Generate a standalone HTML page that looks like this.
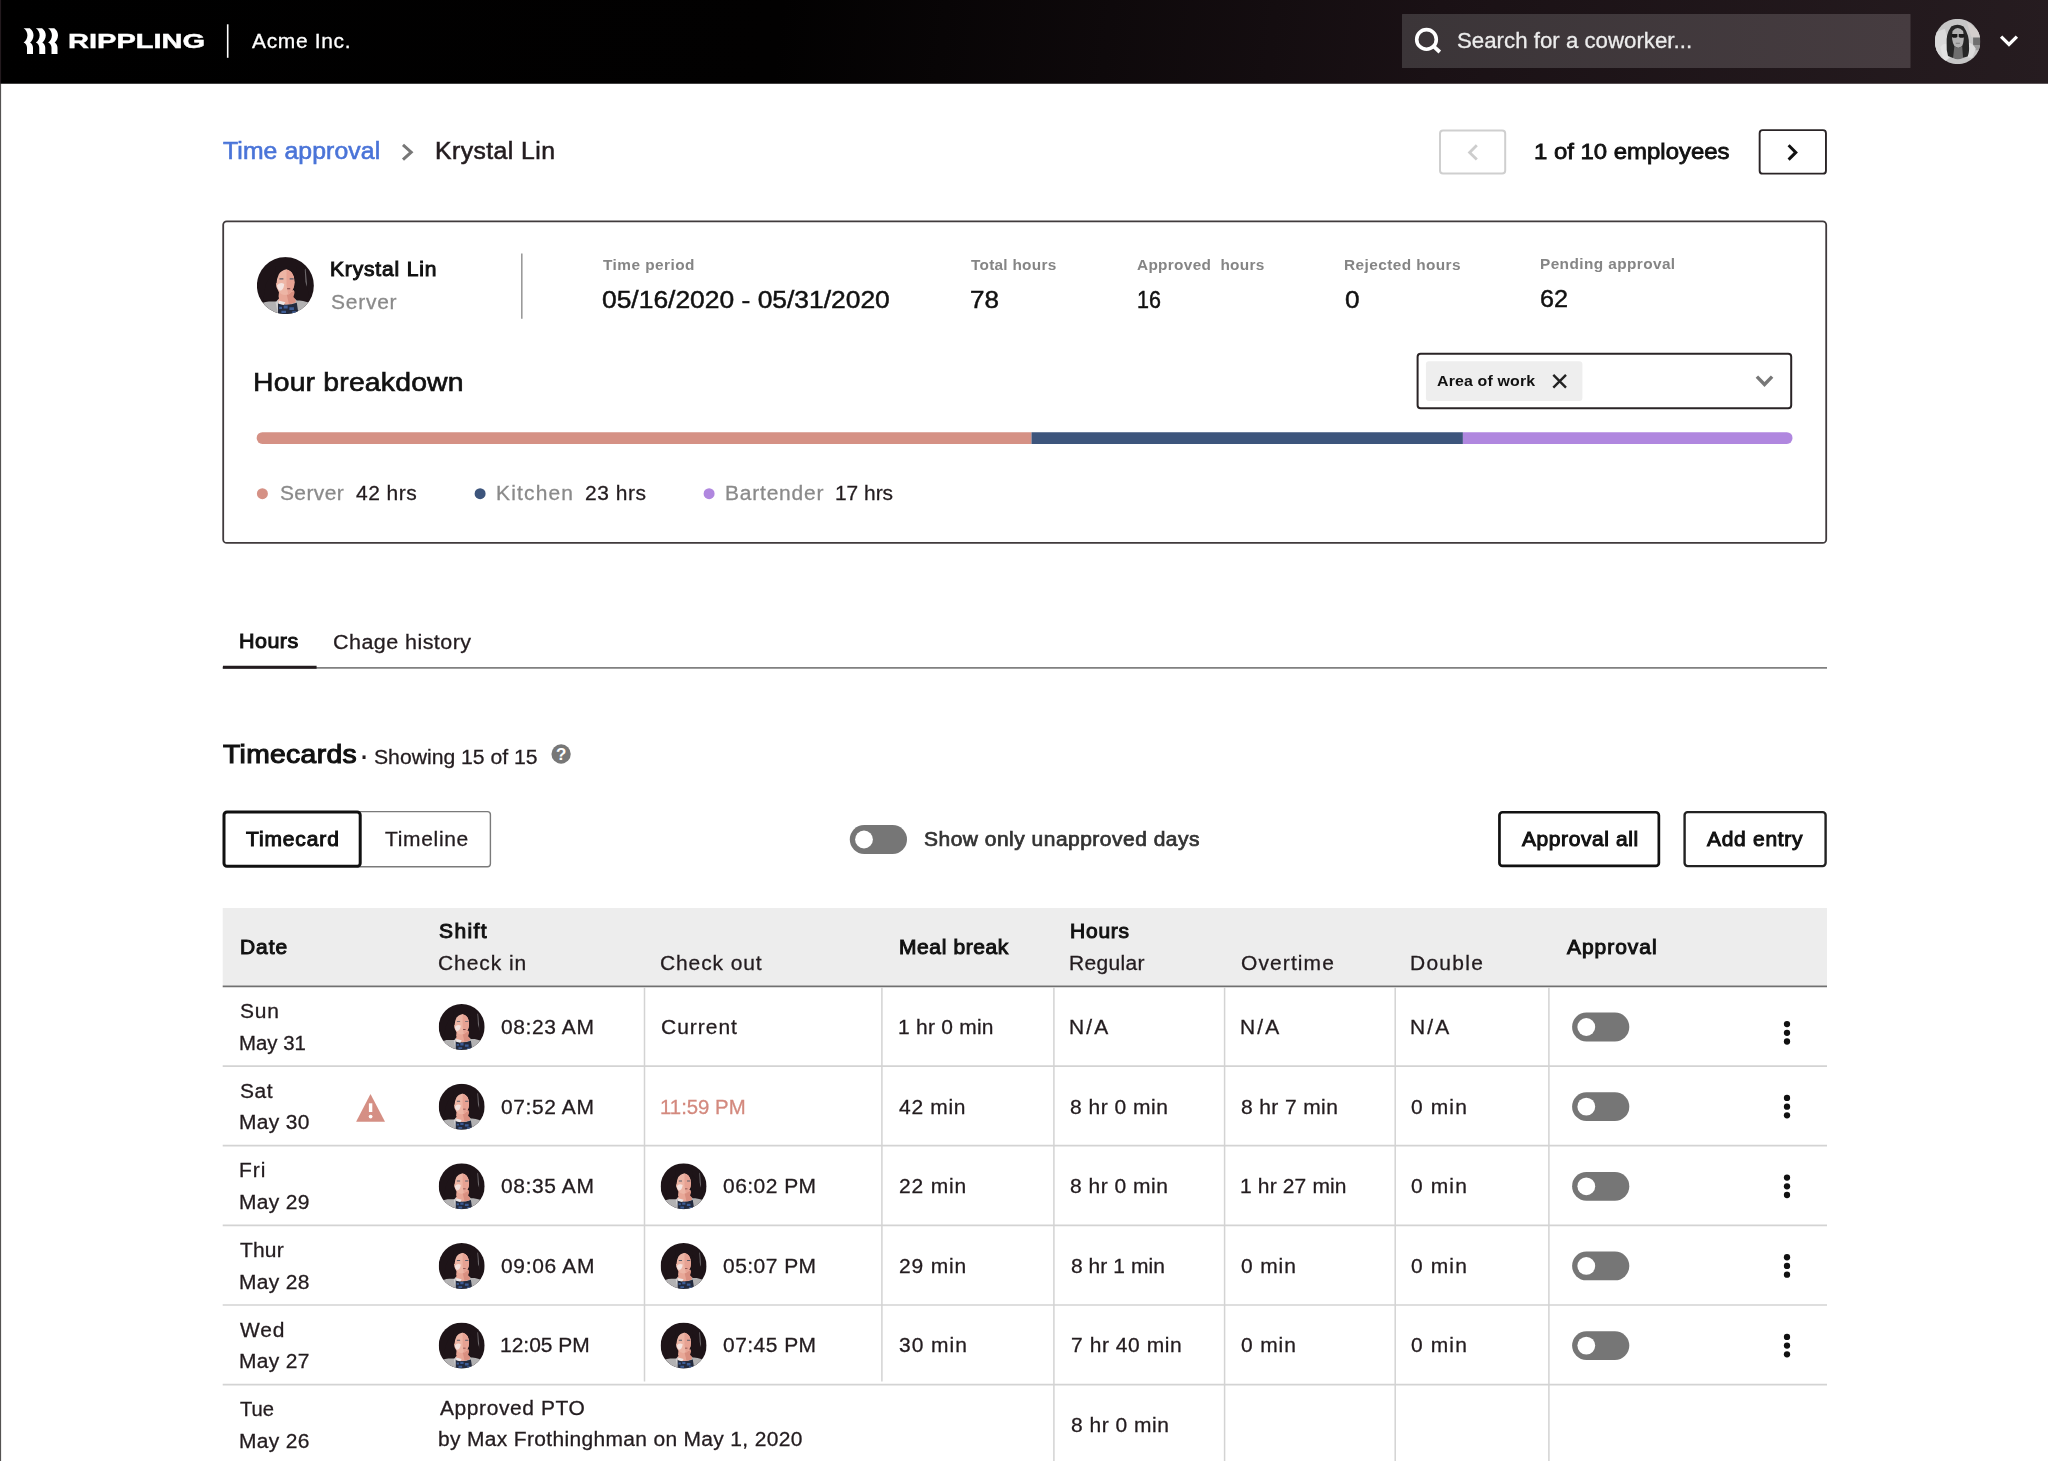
<!DOCTYPE html>
<html lang="en"><head><meta charset="utf-8"><title>Time approval - Krystal Lin</title>
<style>
html,body{margin:0;padding:0;}
body{width:2048px;height:1461px;position:relative;overflow:hidden;background:#fff;font-family:"Liberation Sans", sans-serif;}
.t{position:absolute;white-space:pre;line-height:1;font-family:"Liberation Sans", sans-serif;}
.a{position:absolute;}
.tx{left:0;top:0;width:2048px;height:1461px;will-change:transform;}
svg{display:block}
</style></head><body>
<div class="a" style="left:0px;top:0px;width:2048px;height:84px;background:linear-gradient(97deg,#000 0%,#020101 38%,#1a1115 70%,#261c20 100%)"></div>
<svg class="a" style="left:0;top:0" width="2048" height="1461" viewBox="0 0 2048 1461" fill="none">
<defs><linearGradient id="sg" x1="0" x2="1" y1="0" y2="0"><stop offset="0" stop-color="#3b3538"/><stop offset="1" stop-color="#463c40"/></linearGradient></defs>
<rect x="0.00" y="83.75" width="2048.00" height="0.75" rx="0" fill="#fff" stroke="none" stroke-width="0"/>
<path d="M0.55 0V83.8" stroke="#231a1e" stroke-width="1.1"/>
<path d="M0.55 83.8V1461" stroke="#555352" stroke-width="1.1"/>
<path d="M0 0H6.2C8.5 1.6 9.9 4.4 9.9 7C9.9 10 8.3 12.8 6.5 14.4C8.3 15.6 9.4 17.5 9.4 19.6V25.9H3.4V19.6C3.4 17 2 15.2 0 14.4C2.3 12.8 3.8 10 3.8 7C3.8 4.2 2.3 1.6 0 0Z" fill="#fff" stroke="none" stroke-width="0" transform="translate(23.60 28.2)"/>
<path d="M0 0H6.2C8.5 1.6 9.9 4.4 9.9 7C9.9 10 8.3 12.8 6.5 14.4C8.3 15.6 9.4 17.5 9.4 19.6V25.9H3.4V19.6C3.4 17 2 15.2 0 14.4C2.3 12.8 3.8 10 3.8 7C3.8 4.2 2.3 1.6 0 0Z" fill="#fff" stroke="none" stroke-width="0" transform="translate(35.85 28.2)"/>
<path d="M0 0H6.2C8.5 1.6 9.9 4.4 9.9 7C9.9 10 8.3 12.8 6.5 14.4C8.3 15.6 9.4 17.5 9.4 19.6V25.9H3.4V19.6C3.4 17 2 15.2 0 14.4C2.3 12.8 3.8 10 3.8 7C3.8 4.2 2.3 1.6 0 0Z" fill="#fff" stroke="none" stroke-width="0" transform="translate(48.10 28.2)"/>
<path d="M227.7 24.3V57.8" stroke="#fff" stroke-width="1.6"/>
<rect x="1402.00" y="14.00" width="508.50" height="53.90" rx="0.5" fill="url(#sg)" stroke="none" stroke-width="0"/>
<circle cx="1426.5" cy="39.4" r="9.8" fill="none" stroke="#fff" stroke-width="3.6"/>
<path d="M1433.6 46.3L1439.8 52" fill="none" stroke="#fff" stroke-width="3.8" />
<svg x="1934.8" y="18.7" width="45.6" height="45.6" viewBox="0 0 100 100"><clipPath id="hc"><circle cx="50" cy="50" r="50"/></clipPath><g clip-path="url(#hc)">
<rect width="100" height="100" fill="#c6c6c6"/>
<path d="M0 30L22 22L30 50L16 100H0Z" fill="#d9d9d9"/>
<path d="M70 6L100 30V45L80 40Z" fill="#d4cfcd"/>
<path d="M84 41h16v18H84z" fill="#6f6f6f"/>
<path d="M84 59h16v10H84z" fill="#9a9a9a"/>
<path d="M12 62Q20 52 27 56L34 84L20 96Z" fill="#e2e2e2"/>
<path d="M74 52Q84 54 90 66L82 86L68 84Z" fill="#dcdcdc"/>
<path d="M36 17Q50 9 63 17Q76 36 75 58Q76 74 72 83L60 86H40L29 82Q25 70 26 56Q24 34 36 17Z" fill="#262626"/>
<path d="M39 27Q50 14 62 27Q66 46 60 60Q51 68 43 60Q35 46 39 27Z" fill="#b3b3b3"/>
<path d="M43 60Q51 67 60 60L62 86Q50 92 40 86Z" fill="#6e6e6e"/>
<path d="M37.5 33.5H49.5V40Q43.5 44 37.5 40ZM52.5 33.5H65V40Q59 44 52.5 40Z" fill="#1b1b1b"/>
<path d="M46 53h9v2.2h-9z" fill="#7d7d7d"/>
</g></svg>
<path d="M2001.1 36.6L2009 44.5L2016.9 36.6" fill="none" stroke="#fff" stroke-width="3.3" />
<path d="M403 144.8L411.2 152.2L403 159.6" fill="none" stroke="#777" stroke-width="3" />
<rect x="1440.00" y="130.60" width="65.20" height="42.90" rx="3" fill="none" stroke="#cfcfcf" stroke-width="2"/>
<path d="M1476.8 145.2L1469.6 152.4L1476.8 159.6" fill="none" stroke="#cdcdcd" stroke-width="2.8" />
<rect x="1759.65" y="130.15" width="66.30" height="43.50" rx="3" fill="none" stroke="#2a2426" stroke-width="1.9"/>
<path d="M1788.6 145.2L1795.8 152.4L1788.6 159.6" fill="none" stroke="#111" stroke-width="3" />
<rect x="223.20" y="221.30" width="1603.00" height="321.60" rx="3.5" fill="none" stroke="#403b3d" stroke-width="1.8"/>
<svg x="256.90" y="257.10" width="57.0" height="57.0" viewBox="0 0 100 100"><clipPath id="ac1"><circle cx="50" cy="50" r="50"/></clipPath>
<g clip-path="url(#ac1)">
<rect width="100" height="100" fill="#1e1418"/>
<path d="M85.5 20Q89 45 88 74L85 73Q86 45 84 22Z" fill="#6b6669"/>
<path d="M5 82L37 72L50 80L67 73L92 80L100 100H0Z" fill="#b3b2b3"/>
<path d="M38 71L32 76L37 100H40Z" fill="#cfcecf"/>
<path d="M37 81Q52 86 70 80L73 100H37Z" fill="#232a3d"/>
<path d="M39 87h5v4h-5zM47 85h7v5h-7zM57 88h8v5h-8zM43 94h8v4h-8zM62 95h7v4h-7z" fill="#3d5c96"/>
<path d="M39 58H65L68 79Q52 87 37 80Z" fill="#e8a797"/>
<path d="M38 76L50 79L47 84L38 82Z" fill="#ece7e7"/>
<path d="M52 64L66 60L68 79Q60 83 56 82Z" fill="#d98f80"/>
<ellipse cx="49.5" cy="43.5" rx="16.5" ry="23" fill="#edb5a5"/>
<path d="M52 22Q66 24 66 44Q66 58 55 66L52 50Z" fill="#e7a293"/>
<path d="M35 50Q40 43 48 47Q47 58 40 59Q36 57 35 50Z" fill="#f4e3df"/>
<path d="M32 46V16H56L52 21.5Q42 24 38.5 30Q35 37 34.5 46Z" fill="#1e1418"/>
<path d="M52 21.5Q62 24 65 32Q67 38 67 46L70 46V16H52Z" fill="#1e1418"/>
<path d="M39.5 37.3h7v2h-7zM57.5 37.3h7v2h-7z" fill="#5a5c68"/>
<path d="M53 54.6h5.4v1.7H53z" fill="#7a4545"/>
<path d="M33 40Q30 60 39 72L34 78H12Q12 40 30 28Z" fill="#1e1418"/>
<path d="M66.5 40Q69 58 64 70L70 76H92Q90 40 70 26Z" fill="#1e1418"/>
</g></svg>
<path d="M521.8 253.4V318.7" stroke="#9a9a9a" stroke-width="1.6"/>
<rect x="1417.60" y="353.80" width="373.60" height="54.40" rx="3" fill="none" stroke="#2a2426" stroke-width="2"/>
<rect x="1425.90" y="361.30" width="156.50" height="39.60" rx="3" fill="#eeeeee" stroke="none" stroke-width="0"/>
<path d="M1553.3 374.9L1566 387.6M1566 374.9L1553.3 387.6" fill="none" stroke="#222" stroke-width="2.4" />
<path d="M1756.9 376.6L1764.5 384.5L1772.1 376.6" fill="none" stroke="#777" stroke-width="3.4" />
<clipPath id="barc"><rect x="256.7" y="432.2" width="1535.8" height="11.7" rx="5.6"/></clipPath><g clip-path="url(#barc)"><rect x="256" y="432" width="775.5" height="12" fill="#d59185"/><rect x="1031.5" y="432" width="431.4" height="12" fill="#3d557c"/><rect x="1462.9" y="432" width="330" height="12" fill="#b087df"/></g>
<circle cx="262.4" cy="493.7" r="5.5" fill="#d59185"/>
<circle cx="480.1" cy="493.7" r="5.5" fill="#3d557c"/>
<circle cx="709.1" cy="493.7" r="5.5" fill="#b087df"/>
<path d="M222.7 667.85H1827" stroke="#808080" stroke-width="1.8"/>
<path d="M222.9 667.3H316.6" stroke="#231c1f" stroke-width="3"/>
<circle cx="561.1" cy="754" r="9.65" fill="#777"/>
<text x="561.1" y="760.1" text-anchor="middle" font-family="Liberation Sans, sans-serif" font-weight="700" font-size="17" fill="#fff">?</text>
<rect x="355.70" y="811.60" width="134.70" height="55.10" rx="3" fill="none" stroke="#7a7a7a" stroke-width="1.4"/>
<rect x="224.00" y="812.00" width="136.20" height="54.20" rx="3" fill="#fff" stroke="#111" stroke-width="3"/>
<rect x="849.80" y="825.10" width="57.20" height="28.80" rx="14.4" fill="#767676" stroke="none" stroke-width="0"/>
<circle cx="864.0" cy="839.5" r="8.9" fill="#fff"/>
<rect x="1499.45" y="812.25" width="159.40" height="53.70" rx="3" fill="none" stroke="#111" stroke-width="2.7"/>
<rect x="1684.60" y="812.10" width="141.00" height="54.00" rx="3" fill="none" stroke="#222" stroke-width="2.4"/>
<rect x="222.70" y="908.00" width="1604.30" height="77.60" rx="0" fill="#ededed" stroke="none" stroke-width="0"/>
<path d="M222.7 986.4H1827" stroke="#707070" stroke-width="1.6"/>
<path d="M222.7 1066.05H1827" stroke="#d3d3d3" stroke-width="1.7"/>
<path d="M222.7 1145.7H1827" stroke="#d3d3d3" stroke-width="1.7"/>
<path d="M222.7 1225.35H1827" stroke="#d3d3d3" stroke-width="1.7"/>
<path d="M222.7 1305.0H1827" stroke="#d3d3d3" stroke-width="1.7"/>
<path d="M222.7 1384.65H1827" stroke="#d3d3d3" stroke-width="1.7"/>
<path d="M644.5 987.2V1381.5" stroke="#d3d3d3" stroke-width="1.5"/>
<path d="M881.9 987.2V1381.5" stroke="#d3d3d3" stroke-width="1.5"/>
<path d="M1053.9 987.2V1461" stroke="#d3d3d3" stroke-width="1.5"/>
<path d="M1224.6 987.2V1461" stroke="#d3d3d3" stroke-width="1.5"/>
<path d="M1395.2 987.2V1461" stroke="#d3d3d3" stroke-width="1.5"/>
<path d="M1548.9 987.2V1461" stroke="#d3d3d3" stroke-width="1.5"/>
<svg x="438.70" y="1004.00" width="46" height="46" viewBox="0 0 100 100"><clipPath id="ac2"><circle cx="50" cy="50" r="50"/></clipPath>
<g clip-path="url(#ac2)">
<rect width="100" height="100" fill="#1e1418"/>
<path d="M85.5 20Q89 45 88 74L85 73Q86 45 84 22Z" fill="#6b6669"/>
<path d="M5 82L37 72L50 80L67 73L92 80L100 100H0Z" fill="#b3b2b3"/>
<path d="M38 71L32 76L37 100H40Z" fill="#cfcecf"/>
<path d="M37 81Q52 86 70 80L73 100H37Z" fill="#232a3d"/>
<path d="M39 87h5v4h-5zM47 85h7v5h-7zM57 88h8v5h-8zM43 94h8v4h-8zM62 95h7v4h-7z" fill="#3d5c96"/>
<path d="M39 58H65L68 79Q52 87 37 80Z" fill="#e8a797"/>
<path d="M38 76L50 79L47 84L38 82Z" fill="#ece7e7"/>
<path d="M52 64L66 60L68 79Q60 83 56 82Z" fill="#d98f80"/>
<ellipse cx="49.5" cy="43.5" rx="16.5" ry="23" fill="#edb5a5"/>
<path d="M52 22Q66 24 66 44Q66 58 55 66L52 50Z" fill="#e7a293"/>
<path d="M35 50Q40 43 48 47Q47 58 40 59Q36 57 35 50Z" fill="#f4e3df"/>
<path d="M32 46V16H56L52 21.5Q42 24 38.5 30Q35 37 34.5 46Z" fill="#1e1418"/>
<path d="M52 21.5Q62 24 65 32Q67 38 67 46L70 46V16H52Z" fill="#1e1418"/>
<path d="M39.5 37.3h7v2h-7zM57.5 37.3h7v2h-7z" fill="#5a5c68"/>
<path d="M53 54.6h5.4v1.7H53z" fill="#7a4545"/>
<path d="M33 40Q30 60 39 72L34 78H12Q12 40 30 28Z" fill="#1e1418"/>
<path d="M66.5 40Q69 58 64 70L70 76H92Q90 40 70 26Z" fill="#1e1418"/>
</g></svg>
<rect x="1572.10" y="1012.60" width="57.20" height="28.80" rx="14.4" fill="#767676" stroke="none" stroke-width="0"/>
<circle cx="1586.3" cy="1027.0" r="8.9" fill="#fff"/>
<circle cx="1787" cy="1024.1" r="3.15" fill="#111"/>
<circle cx="1787" cy="1032.8" r="3.15" fill="#111"/>
<circle cx="1787" cy="1041.5" r="3.15" fill="#111"/>
<svg x="438.70" y="1083.65" width="46" height="46" viewBox="0 0 100 100"><clipPath id="ac3"><circle cx="50" cy="50" r="50"/></clipPath>
<g clip-path="url(#ac3)">
<rect width="100" height="100" fill="#1e1418"/>
<path d="M85.5 20Q89 45 88 74L85 73Q86 45 84 22Z" fill="#6b6669"/>
<path d="M5 82L37 72L50 80L67 73L92 80L100 100H0Z" fill="#b3b2b3"/>
<path d="M38 71L32 76L37 100H40Z" fill="#cfcecf"/>
<path d="M37 81Q52 86 70 80L73 100H37Z" fill="#232a3d"/>
<path d="M39 87h5v4h-5zM47 85h7v5h-7zM57 88h8v5h-8zM43 94h8v4h-8zM62 95h7v4h-7z" fill="#3d5c96"/>
<path d="M39 58H65L68 79Q52 87 37 80Z" fill="#e8a797"/>
<path d="M38 76L50 79L47 84L38 82Z" fill="#ece7e7"/>
<path d="M52 64L66 60L68 79Q60 83 56 82Z" fill="#d98f80"/>
<ellipse cx="49.5" cy="43.5" rx="16.5" ry="23" fill="#edb5a5"/>
<path d="M52 22Q66 24 66 44Q66 58 55 66L52 50Z" fill="#e7a293"/>
<path d="M35 50Q40 43 48 47Q47 58 40 59Q36 57 35 50Z" fill="#f4e3df"/>
<path d="M32 46V16H56L52 21.5Q42 24 38.5 30Q35 37 34.5 46Z" fill="#1e1418"/>
<path d="M52 21.5Q62 24 65 32Q67 38 67 46L70 46V16H52Z" fill="#1e1418"/>
<path d="M39.5 37.3h7v2h-7zM57.5 37.3h7v2h-7z" fill="#5a5c68"/>
<path d="M53 54.6h5.4v1.7H53z" fill="#7a4545"/>
<path d="M33 40Q30 60 39 72L34 78H12Q12 40 30 28Z" fill="#1e1418"/>
<path d="M66.5 40Q69 58 64 70L70 76H92Q90 40 70 26Z" fill="#1e1418"/>
</g></svg>
<rect x="1572.10" y="1092.25" width="57.20" height="28.80" rx="14.4" fill="#767676" stroke="none" stroke-width="0"/>
<circle cx="1586.3" cy="1106.65" r="8.9" fill="#fff"/>
<circle cx="1787" cy="1097.95" r="3.15" fill="#111"/>
<circle cx="1787" cy="1106.65" r="3.15" fill="#111"/>
<circle cx="1787" cy="1115.35" r="3.15" fill="#111"/>
<svg x="438.70" y="1163.30" width="46" height="46" viewBox="0 0 100 100"><clipPath id="ac4"><circle cx="50" cy="50" r="50"/></clipPath>
<g clip-path="url(#ac4)">
<rect width="100" height="100" fill="#1e1418"/>
<path d="M85.5 20Q89 45 88 74L85 73Q86 45 84 22Z" fill="#6b6669"/>
<path d="M5 82L37 72L50 80L67 73L92 80L100 100H0Z" fill="#b3b2b3"/>
<path d="M38 71L32 76L37 100H40Z" fill="#cfcecf"/>
<path d="M37 81Q52 86 70 80L73 100H37Z" fill="#232a3d"/>
<path d="M39 87h5v4h-5zM47 85h7v5h-7zM57 88h8v5h-8zM43 94h8v4h-8zM62 95h7v4h-7z" fill="#3d5c96"/>
<path d="M39 58H65L68 79Q52 87 37 80Z" fill="#e8a797"/>
<path d="M38 76L50 79L47 84L38 82Z" fill="#ece7e7"/>
<path d="M52 64L66 60L68 79Q60 83 56 82Z" fill="#d98f80"/>
<ellipse cx="49.5" cy="43.5" rx="16.5" ry="23" fill="#edb5a5"/>
<path d="M52 22Q66 24 66 44Q66 58 55 66L52 50Z" fill="#e7a293"/>
<path d="M35 50Q40 43 48 47Q47 58 40 59Q36 57 35 50Z" fill="#f4e3df"/>
<path d="M32 46V16H56L52 21.5Q42 24 38.5 30Q35 37 34.5 46Z" fill="#1e1418"/>
<path d="M52 21.5Q62 24 65 32Q67 38 67 46L70 46V16H52Z" fill="#1e1418"/>
<path d="M39.5 37.3h7v2h-7zM57.5 37.3h7v2h-7z" fill="#5a5c68"/>
<path d="M53 54.6h5.4v1.7H53z" fill="#7a4545"/>
<path d="M33 40Q30 60 39 72L34 78H12Q12 40 30 28Z" fill="#1e1418"/>
<path d="M66.5 40Q69 58 64 70L70 76H92Q90 40 70 26Z" fill="#1e1418"/>
</g></svg>
<svg x="660.60" y="1163.30" width="46" height="46" viewBox="0 0 100 100"><clipPath id="ac5"><circle cx="50" cy="50" r="50"/></clipPath>
<g clip-path="url(#ac5)">
<rect width="100" height="100" fill="#1e1418"/>
<path d="M85.5 20Q89 45 88 74L85 73Q86 45 84 22Z" fill="#6b6669"/>
<path d="M5 82L37 72L50 80L67 73L92 80L100 100H0Z" fill="#b3b2b3"/>
<path d="M38 71L32 76L37 100H40Z" fill="#cfcecf"/>
<path d="M37 81Q52 86 70 80L73 100H37Z" fill="#232a3d"/>
<path d="M39 87h5v4h-5zM47 85h7v5h-7zM57 88h8v5h-8zM43 94h8v4h-8zM62 95h7v4h-7z" fill="#3d5c96"/>
<path d="M39 58H65L68 79Q52 87 37 80Z" fill="#e8a797"/>
<path d="M38 76L50 79L47 84L38 82Z" fill="#ece7e7"/>
<path d="M52 64L66 60L68 79Q60 83 56 82Z" fill="#d98f80"/>
<ellipse cx="49.5" cy="43.5" rx="16.5" ry="23" fill="#edb5a5"/>
<path d="M52 22Q66 24 66 44Q66 58 55 66L52 50Z" fill="#e7a293"/>
<path d="M35 50Q40 43 48 47Q47 58 40 59Q36 57 35 50Z" fill="#f4e3df"/>
<path d="M32 46V16H56L52 21.5Q42 24 38.5 30Q35 37 34.5 46Z" fill="#1e1418"/>
<path d="M52 21.5Q62 24 65 32Q67 38 67 46L70 46V16H52Z" fill="#1e1418"/>
<path d="M39.5 37.3h7v2h-7zM57.5 37.3h7v2h-7z" fill="#5a5c68"/>
<path d="M53 54.6h5.4v1.7H53z" fill="#7a4545"/>
<path d="M33 40Q30 60 39 72L34 78H12Q12 40 30 28Z" fill="#1e1418"/>
<path d="M66.5 40Q69 58 64 70L70 76H92Q90 40 70 26Z" fill="#1e1418"/>
</g></svg>
<rect x="1572.10" y="1171.90" width="57.20" height="28.80" rx="14.4" fill="#767676" stroke="none" stroke-width="0"/>
<circle cx="1586.3" cy="1186.3" r="8.9" fill="#fff"/>
<circle cx="1787" cy="1177.6" r="3.15" fill="#111"/>
<circle cx="1787" cy="1186.3" r="3.15" fill="#111"/>
<circle cx="1787" cy="1195.0" r="3.15" fill="#111"/>
<svg x="438.70" y="1242.95" width="46" height="46" viewBox="0 0 100 100"><clipPath id="ac6"><circle cx="50" cy="50" r="50"/></clipPath>
<g clip-path="url(#ac6)">
<rect width="100" height="100" fill="#1e1418"/>
<path d="M85.5 20Q89 45 88 74L85 73Q86 45 84 22Z" fill="#6b6669"/>
<path d="M5 82L37 72L50 80L67 73L92 80L100 100H0Z" fill="#b3b2b3"/>
<path d="M38 71L32 76L37 100H40Z" fill="#cfcecf"/>
<path d="M37 81Q52 86 70 80L73 100H37Z" fill="#232a3d"/>
<path d="M39 87h5v4h-5zM47 85h7v5h-7zM57 88h8v5h-8zM43 94h8v4h-8zM62 95h7v4h-7z" fill="#3d5c96"/>
<path d="M39 58H65L68 79Q52 87 37 80Z" fill="#e8a797"/>
<path d="M38 76L50 79L47 84L38 82Z" fill="#ece7e7"/>
<path d="M52 64L66 60L68 79Q60 83 56 82Z" fill="#d98f80"/>
<ellipse cx="49.5" cy="43.5" rx="16.5" ry="23" fill="#edb5a5"/>
<path d="M52 22Q66 24 66 44Q66 58 55 66L52 50Z" fill="#e7a293"/>
<path d="M35 50Q40 43 48 47Q47 58 40 59Q36 57 35 50Z" fill="#f4e3df"/>
<path d="M32 46V16H56L52 21.5Q42 24 38.5 30Q35 37 34.5 46Z" fill="#1e1418"/>
<path d="M52 21.5Q62 24 65 32Q67 38 67 46L70 46V16H52Z" fill="#1e1418"/>
<path d="M39.5 37.3h7v2h-7zM57.5 37.3h7v2h-7z" fill="#5a5c68"/>
<path d="M53 54.6h5.4v1.7H53z" fill="#7a4545"/>
<path d="M33 40Q30 60 39 72L34 78H12Q12 40 30 28Z" fill="#1e1418"/>
<path d="M66.5 40Q69 58 64 70L70 76H92Q90 40 70 26Z" fill="#1e1418"/>
</g></svg>
<svg x="660.60" y="1242.95" width="46" height="46" viewBox="0 0 100 100"><clipPath id="ac7"><circle cx="50" cy="50" r="50"/></clipPath>
<g clip-path="url(#ac7)">
<rect width="100" height="100" fill="#1e1418"/>
<path d="M85.5 20Q89 45 88 74L85 73Q86 45 84 22Z" fill="#6b6669"/>
<path d="M5 82L37 72L50 80L67 73L92 80L100 100H0Z" fill="#b3b2b3"/>
<path d="M38 71L32 76L37 100H40Z" fill="#cfcecf"/>
<path d="M37 81Q52 86 70 80L73 100H37Z" fill="#232a3d"/>
<path d="M39 87h5v4h-5zM47 85h7v5h-7zM57 88h8v5h-8zM43 94h8v4h-8zM62 95h7v4h-7z" fill="#3d5c96"/>
<path d="M39 58H65L68 79Q52 87 37 80Z" fill="#e8a797"/>
<path d="M38 76L50 79L47 84L38 82Z" fill="#ece7e7"/>
<path d="M52 64L66 60L68 79Q60 83 56 82Z" fill="#d98f80"/>
<ellipse cx="49.5" cy="43.5" rx="16.5" ry="23" fill="#edb5a5"/>
<path d="M52 22Q66 24 66 44Q66 58 55 66L52 50Z" fill="#e7a293"/>
<path d="M35 50Q40 43 48 47Q47 58 40 59Q36 57 35 50Z" fill="#f4e3df"/>
<path d="M32 46V16H56L52 21.5Q42 24 38.5 30Q35 37 34.5 46Z" fill="#1e1418"/>
<path d="M52 21.5Q62 24 65 32Q67 38 67 46L70 46V16H52Z" fill="#1e1418"/>
<path d="M39.5 37.3h7v2h-7zM57.5 37.3h7v2h-7z" fill="#5a5c68"/>
<path d="M53 54.6h5.4v1.7H53z" fill="#7a4545"/>
<path d="M33 40Q30 60 39 72L34 78H12Q12 40 30 28Z" fill="#1e1418"/>
<path d="M66.5 40Q69 58 64 70L70 76H92Q90 40 70 26Z" fill="#1e1418"/>
</g></svg>
<rect x="1572.10" y="1251.55" width="57.20" height="28.80" rx="14.4" fill="#767676" stroke="none" stroke-width="0"/>
<circle cx="1586.3" cy="1265.95" r="8.9" fill="#fff"/>
<circle cx="1787" cy="1257.25" r="3.15" fill="#111"/>
<circle cx="1787" cy="1265.95" r="3.15" fill="#111"/>
<circle cx="1787" cy="1274.65" r="3.15" fill="#111"/>
<svg x="438.70" y="1322.60" width="46" height="46" viewBox="0 0 100 100"><clipPath id="ac8"><circle cx="50" cy="50" r="50"/></clipPath>
<g clip-path="url(#ac8)">
<rect width="100" height="100" fill="#1e1418"/>
<path d="M85.5 20Q89 45 88 74L85 73Q86 45 84 22Z" fill="#6b6669"/>
<path d="M5 82L37 72L50 80L67 73L92 80L100 100H0Z" fill="#b3b2b3"/>
<path d="M38 71L32 76L37 100H40Z" fill="#cfcecf"/>
<path d="M37 81Q52 86 70 80L73 100H37Z" fill="#232a3d"/>
<path d="M39 87h5v4h-5zM47 85h7v5h-7zM57 88h8v5h-8zM43 94h8v4h-8zM62 95h7v4h-7z" fill="#3d5c96"/>
<path d="M39 58H65L68 79Q52 87 37 80Z" fill="#e8a797"/>
<path d="M38 76L50 79L47 84L38 82Z" fill="#ece7e7"/>
<path d="M52 64L66 60L68 79Q60 83 56 82Z" fill="#d98f80"/>
<ellipse cx="49.5" cy="43.5" rx="16.5" ry="23" fill="#edb5a5"/>
<path d="M52 22Q66 24 66 44Q66 58 55 66L52 50Z" fill="#e7a293"/>
<path d="M35 50Q40 43 48 47Q47 58 40 59Q36 57 35 50Z" fill="#f4e3df"/>
<path d="M32 46V16H56L52 21.5Q42 24 38.5 30Q35 37 34.5 46Z" fill="#1e1418"/>
<path d="M52 21.5Q62 24 65 32Q67 38 67 46L70 46V16H52Z" fill="#1e1418"/>
<path d="M39.5 37.3h7v2h-7zM57.5 37.3h7v2h-7z" fill="#5a5c68"/>
<path d="M53 54.6h5.4v1.7H53z" fill="#7a4545"/>
<path d="M33 40Q30 60 39 72L34 78H12Q12 40 30 28Z" fill="#1e1418"/>
<path d="M66.5 40Q69 58 64 70L70 76H92Q90 40 70 26Z" fill="#1e1418"/>
</g></svg>
<svg x="660.60" y="1322.60" width="46" height="46" viewBox="0 0 100 100"><clipPath id="ac9"><circle cx="50" cy="50" r="50"/></clipPath>
<g clip-path="url(#ac9)">
<rect width="100" height="100" fill="#1e1418"/>
<path d="M85.5 20Q89 45 88 74L85 73Q86 45 84 22Z" fill="#6b6669"/>
<path d="M5 82L37 72L50 80L67 73L92 80L100 100H0Z" fill="#b3b2b3"/>
<path d="M38 71L32 76L37 100H40Z" fill="#cfcecf"/>
<path d="M37 81Q52 86 70 80L73 100H37Z" fill="#232a3d"/>
<path d="M39 87h5v4h-5zM47 85h7v5h-7zM57 88h8v5h-8zM43 94h8v4h-8zM62 95h7v4h-7z" fill="#3d5c96"/>
<path d="M39 58H65L68 79Q52 87 37 80Z" fill="#e8a797"/>
<path d="M38 76L50 79L47 84L38 82Z" fill="#ece7e7"/>
<path d="M52 64L66 60L68 79Q60 83 56 82Z" fill="#d98f80"/>
<ellipse cx="49.5" cy="43.5" rx="16.5" ry="23" fill="#edb5a5"/>
<path d="M52 22Q66 24 66 44Q66 58 55 66L52 50Z" fill="#e7a293"/>
<path d="M35 50Q40 43 48 47Q47 58 40 59Q36 57 35 50Z" fill="#f4e3df"/>
<path d="M32 46V16H56L52 21.5Q42 24 38.5 30Q35 37 34.5 46Z" fill="#1e1418"/>
<path d="M52 21.5Q62 24 65 32Q67 38 67 46L70 46V16H52Z" fill="#1e1418"/>
<path d="M39.5 37.3h7v2h-7zM57.5 37.3h7v2h-7z" fill="#5a5c68"/>
<path d="M53 54.6h5.4v1.7H53z" fill="#7a4545"/>
<path d="M33 40Q30 60 39 72L34 78H12Q12 40 30 28Z" fill="#1e1418"/>
<path d="M66.5 40Q69 58 64 70L70 76H92Q90 40 70 26Z" fill="#1e1418"/>
</g></svg>
<rect x="1572.10" y="1331.20" width="57.20" height="28.80" rx="14.4" fill="#767676" stroke="none" stroke-width="0"/>
<circle cx="1586.3" cy="1345.6" r="8.9" fill="#fff"/>
<circle cx="1787" cy="1336.9" r="3.15" fill="#111"/>
<circle cx="1787" cy="1345.6" r="3.15" fill="#111"/>
<circle cx="1787" cy="1354.3" r="3.15" fill="#111"/>
<path d="M370.5 1093.9L385 1121.8H356.1Z" fill="#d58f84" stroke="none" stroke-width="0" />
<path d="M368.9 1103.3h3.4v8.7h-3.4z" fill="#fff" stroke="none" stroke-width="0" />
<circle cx="370.6" cy="1116.6" r="1.9" fill="#fff"/>
</svg>
<div class="a tx">
<span class="t" style="left:68.48px;top:30.96px;font-size:20.6px;font-weight:700;color:#fff;-webkit-text-stroke:0.45px #fff;transform:scaleX(1.4106);transform-origin:0 0;">RIPPLING</span>
<span class="t" style="left:251.90px;top:31.79px;font-size:19.5px;color:#fff;letter-spacing:0.628px;-webkit-text-stroke:0.28px #fff;transform:scaleX(1.0750);transform-origin:0 0;">Acme Inc.</span>
<span class="t" style="left:1456.50px;top:31.00px;font-size:21.5px;color:#ececec;-webkit-text-stroke:0.28px #ececec;transform:scaleX(1.0355);transform-origin:0 0;">Search for a coworker...</span>
<span class="t" style="left:222.51px;top:139.63px;font-size:23px;color:#4a74d8;letter-spacing:0.107px;-webkit-text-stroke:0.6px #4a74d8;transform:scaleX(1.0750);transform-origin:0 0;">Time approval</span>
<span class="t" style="left:435.17px;top:139.53px;font-size:23px;color:#231c1f;letter-spacing:0.427px;-webkit-text-stroke:0.55px #231c1f;transform:scaleX(1.0750);transform-origin:0 0;">Krystal Lin</span>
<span class="t" style="left:1534.21px;top:141.15px;font-size:22.5px;color:#111;-webkit-text-stroke:0.8px #111;transform:scaleX(1.0630);transform-origin:0 0;">1 of 10 employees</span>
<span class="t" style="left:329.96px;top:260.29px;font-size:19.5px;color:#111;letter-spacing:0.796px;-webkit-text-stroke:0.95px #111;transform:scaleX(1.0750);transform-origin:0 0;">Krystal Lin</span>
<span class="t" style="left:330.64px;top:292.89px;font-size:19.5px;color:#8a8a8a;letter-spacing:0.710px;-webkit-text-stroke:0.28px #8a8a8a;transform:scaleX(1.0750);transform-origin:0 0;">Server</span>
<span class="t" style="left:602.70px;top:258.10px;font-size:14.3px;font-weight:700;color:#858585;letter-spacing:0.431px;transform:scaleX(1.0750);transform-origin:0 0;">Time period</span>
<span class="t" style="left:601.87px;top:288.93px;font-size:23px;color:#111;-webkit-text-stroke:0.45px #111;transform:scaleX(1.1481);transform-origin:0 0;">05/16/2020 - 05/31/2020</span>
<span class="t" style="left:971.20px;top:257.80px;font-size:14.3px;font-weight:700;color:#858585;letter-spacing:0.248px;transform:scaleX(1.0750);transform-origin:0 0;">Total hours</span>
<span class="t" style="left:969.98px;top:289.03px;font-size:23px;color:#111;-webkit-text-stroke:0.45px #111;transform:scaleX(1.1327);transform-origin:0 0;">78</span>
<span class="t" style="left:1137.16px;top:257.80px;font-size:14.3px;font-weight:700;color:#858585;letter-spacing:0.291px;transform:scaleX(1.0750);transform-origin:0 0;">Approved  hours</span>
<span class="t" style="left:1137.16px;top:289.03px;font-size:23px;color:#111;-webkit-text-stroke:0.45px #111;transform:scaleX(0.9348);transform-origin:0 0;">16</span>
<span class="t" style="left:1344.44px;top:257.80px;font-size:14.3px;font-weight:700;color:#858585;letter-spacing:0.396px;transform:scaleX(1.0750);transform-origin:0 0;">Rejected hours</span>
<span class="t" style="left:1344.58px;top:289.03px;font-size:23px;color:#111;-webkit-text-stroke:0.45px #111;transform:scaleX(1.1391);transform-origin:0 0;">0</span>
<span class="t" style="left:1540.44px;top:256.50px;font-size:14.3px;font-weight:700;color:#858585;letter-spacing:0.384px;transform:scaleX(1.0750);transform-origin:0 0;">Pending approval</span>
<span class="t" style="left:1540.22px;top:287.93px;font-size:23px;color:#111;-webkit-text-stroke:0.45px #111;transform:scaleX(1.0945);transform-origin:0 0;">62</span>
<span class="t" style="left:253.18px;top:368.65px;font-size:26.4px;color:#111;letter-spacing:0.170px;-webkit-text-stroke:0.65px #111;transform:scaleX(1.0750);transform-origin:0 0;">Hour breakdown</span>
<span class="t" style="left:1437.35px;top:373.57px;font-size:14.8px;font-weight:700;color:#111;letter-spacing:0.150px;transform:scaleX(1.0750);transform-origin:0 0;">Area of work</span>
<span class="t" style="left:279.94px;top:483.89px;font-size:19.5px;color:#8a8a8a;letter-spacing:0.357px;-webkit-text-stroke:0.28px #8a8a8a;transform:scaleX(1.0750);transform-origin:0 0;">Server</span>
<span class="t" style="left:355.97px;top:483.89px;font-size:19.5px;color:#231c1f;letter-spacing:0.451px;-webkit-text-stroke:0.28px #231c1f;transform:scaleX(1.0750);transform-origin:0 0;">42 hrs</span>
<span class="t" style="left:496.46px;top:483.89px;font-size:19.5px;color:#8a8a8a;letter-spacing:1.100px;-webkit-text-stroke:0.28px #8a8a8a;transform:scaleX(1.0750);transform-origin:0 0;">Kitchen</span>
<span class="t" style="left:584.62px;top:483.89px;font-size:19.5px;color:#231c1f;letter-spacing:0.498px;-webkit-text-stroke:0.28px #231c1f;transform:scaleX(1.0750);transform-origin:0 0;">23 hrs</span>
<span class="t" style="left:725.46px;top:483.89px;font-size:19.5px;color:#8a8a8a;letter-spacing:0.742px;-webkit-text-stroke:0.28px #8a8a8a;transform:scaleX(1.0750);transform-origin:0 0;">Bartender</span>
<span class="t" style="left:834.89px;top:483.89px;font-size:19.5px;color:#231c1f;-webkit-text-stroke:0.28px #231c1f;transform:scaleX(1.0713);transform-origin:0 0;">17 hrs</span>
<span class="t" style="left:238.72px;top:630.87px;font-size:20px;color:#111;letter-spacing:0.419px;-webkit-text-stroke:0.95px #111;transform:scaleX(1.0750);transform-origin:0 0;">Hours</span>
<span class="t" style="left:333.09px;top:631.67px;font-size:20px;color:#231c1f;letter-spacing:0.415px;-webkit-text-stroke:0.28px #231c1f;transform:scaleX(1.0750);transform-origin:0 0;">Chage history</span>
<span class="t" style="left:222.86px;top:741.34px;font-size:26.3px;color:#111;letter-spacing:0.315px;-webkit-text-stroke:1.1px #111;transform:scaleX(1.0750);transform-origin:0 0;">Timecards</span>
<span class="t" style="left:360.84px;top:745.38px;font-size:24px;font-weight:700;color:#231c1f;transform:scaleX(0.9067);transform-origin:0 0;">·</span>
<span class="t" style="left:373.74px;top:746.67px;font-size:20px;color:#231c1f;-webkit-text-stroke:0.28px #231c1f;transform:scaleX(1.0586);transform-origin:0 0;">Showing 15 of 15</span>
<span class="t" style="left:245.67px;top:830.19px;font-size:19.5px;color:#111;letter-spacing:0.827px;-webkit-text-stroke:0.95px #111;transform:scaleX(1.0750);transform-origin:0 0;">Timecard</span>
<span class="t" style="left:385.27px;top:830.19px;font-size:19.5px;color:#231c1f;letter-spacing:0.643px;-webkit-text-stroke:0.28px #231c1f;transform:scaleX(1.0750);transform-origin:0 0;">Timeline</span>
<span class="t" style="left:924.04px;top:830.09px;font-size:19.5px;color:#333;letter-spacing:0.467px;-webkit-text-stroke:0.7px #333;transform:scaleX(1.0750);transform-origin:0 0;">Show only unapproved days</span>
<span class="t" style="left:1521.70px;top:830.19px;font-size:19.5px;color:#111;letter-spacing:0.562px;-webkit-text-stroke:0.95px #111;transform:scaleX(1.0750);transform-origin:0 0;">Approval all</span>
<span class="t" style="left:1707.10px;top:830.19px;font-size:19.5px;color:#111;letter-spacing:0.671px;-webkit-text-stroke:0.95px #111;transform:scaleX(1.0750);transform-origin:0 0;">Add entry</span>
<span class="t" style="left:239.56px;top:938.19px;font-size:19.5px;color:#111;letter-spacing:0.902px;-webkit-text-stroke:0.95px #111;transform:scaleX(1.0750);transform-origin:0 0;">Date</span>
<span class="t" style="left:438.74px;top:922.39px;font-size:19.5px;color:#111;letter-spacing:1.311px;-webkit-text-stroke:0.95px #111;transform:scaleX(1.0750);transform-origin:0 0;">Shift</span>
<span class="t" style="left:438.42px;top:953.59px;font-size:19.5px;color:#231c1f;letter-spacing:0.891px;-webkit-text-stroke:0.28px #231c1f;transform:scaleX(1.0750);transform-origin:0 0;">Check in</span>
<span class="t" style="left:660.42px;top:953.59px;font-size:19.5px;color:#231c1f;letter-spacing:0.841px;-webkit-text-stroke:0.28px #231c1f;transform:scaleX(1.0750);transform-origin:0 0;">Check out</span>
<span class="t" style="left:899.06px;top:938.19px;font-size:19.5px;color:#111;letter-spacing:0.580px;-webkit-text-stroke:0.95px #111;transform:scaleX(1.0750);transform-origin:0 0;">Meal break</span>
<span class="t" style="left:1069.66px;top:922.39px;font-size:19.5px;color:#111;letter-spacing:0.739px;-webkit-text-stroke:0.95px #111;transform:scaleX(1.0750);transform-origin:0 0;">Hours</span>
<span class="t" style="left:1069.36px;top:953.59px;font-size:19.5px;color:#231c1f;letter-spacing:0.315px;-webkit-text-stroke:0.28px #231c1f;transform:scaleX(1.0750);transform-origin:0 0;">Regular</span>
<span class="t" style="left:1240.52px;top:953.59px;font-size:19.5px;color:#231c1f;letter-spacing:1.037px;-webkit-text-stroke:0.28px #231c1f;transform:scaleX(1.0750);transform-origin:0 0;">Overtime</span>
<span class="t" style="left:1410.06px;top:953.59px;font-size:19.5px;color:#231c1f;letter-spacing:1.183px;-webkit-text-stroke:0.28px #231c1f;transform:scaleX(1.0750);transform-origin:0 0;">Double</span>
<span class="t" style="left:1566.80px;top:938.19px;font-size:19.5px;color:#111;letter-spacing:0.910px;-webkit-text-stroke:0.95px #111;transform:scaleX(1.0750);transform-origin:0 0;">Approval</span>
<span class="t" style="left:239.74px;top:1001.99px;font-size:19.5px;color:#231c1f;letter-spacing:0.806px;-webkit-text-stroke:0.28px #231c1f;transform:scaleX(1.0750);transform-origin:0 0;">Sun</span>
<span class="t" style="left:239.01px;top:1033.69px;font-size:19.5px;color:#231c1f;-webkit-text-stroke:0.28px #231c1f;transform:scaleX(1.0449);transform-origin:0 0;">May 31</span>
<span class="t" style="left:500.84px;top:1017.89px;font-size:19.5px;color:#231c1f;letter-spacing:0.577px;-webkit-text-stroke:0.28px #231c1f;transform:scaleX(1.0750);transform-origin:0 0;">08:23 AM</span>
<span class="t" style="left:660.52px;top:1017.89px;font-size:19.5px;color:#231c1f;letter-spacing:0.932px;-webkit-text-stroke:0.28px #231c1f;transform:scaleX(1.0750);transform-origin:0 0;">Current</span>
<span class="t" style="left:898.19px;top:1017.89px;font-size:19.5px;color:#231c1f;letter-spacing:0.236px;-webkit-text-stroke:0.28px #231c1f;transform:scaleX(1.0750);transform-origin:0 0;">1 hr 0 min</span>
<span class="t" style="left:1068.86px;top:1017.89px;font-size:19.5px;color:#231c1f;letter-spacing:1.996px;-webkit-text-stroke:0.28px #231c1f;transform:scaleX(1.0750);transform-origin:0 0;">N/A</span>
<span class="t" style="left:1239.86px;top:1017.89px;font-size:19.5px;color:#231c1f;letter-spacing:1.996px;-webkit-text-stroke:0.28px #231c1f;transform:scaleX(1.0750);transform-origin:0 0;">N/A</span>
<span class="t" style="left:1410.06px;top:1017.89px;font-size:19.5px;color:#231c1f;letter-spacing:1.996px;-webkit-text-stroke:0.28px #231c1f;transform:scaleX(1.0750);transform-origin:0 0;">N/A</span>
<span class="t" style="left:239.74px;top:1081.64px;font-size:19.5px;color:#231c1f;letter-spacing:0.474px;-webkit-text-stroke:0.28px #231c1f;transform:scaleX(1.0750);transform-origin:0 0;">Sat</span>
<span class="t" style="left:238.96px;top:1113.34px;font-size:19.5px;color:#231c1f;letter-spacing:0.301px;-webkit-text-stroke:0.28px #231c1f;transform:scaleX(1.0750);transform-origin:0 0;">May 30</span>
<span class="t" style="left:500.84px;top:1097.54px;font-size:19.5px;color:#231c1f;letter-spacing:0.577px;-webkit-text-stroke:0.28px #231c1f;transform:scaleX(1.0750);transform-origin:0 0;">07:52 AM</span>
<span class="t" style="left:660.23px;top:1097.54px;font-size:19.5px;color:#d3897e;-webkit-text-stroke:0.28px #d3897e;transform:scaleX(1.0442);transform-origin:0 0;">11:59 PM</span>
<span class="t" style="left:899.17px;top:1097.54px;font-size:19.5px;color:#231c1f;letter-spacing:0.667px;-webkit-text-stroke:0.28px #231c1f;transform:scaleX(1.0750);transform-origin:0 0;">42 min</span>
<span class="t" style="left:1069.84px;top:1097.54px;font-size:19.5px;color:#231c1f;letter-spacing:0.478px;-webkit-text-stroke:0.28px #231c1f;transform:scaleX(1.0750);transform-origin:0 0;">8 hr 0 min</span>
<span class="t" style="left:1240.84px;top:1097.54px;font-size:19.5px;color:#231c1f;letter-spacing:0.375px;-webkit-text-stroke:0.28px #231c1f;transform:scaleX(1.0750);transform-origin:0 0;">8 hr 7 min</span>
<span class="t" style="left:1410.84px;top:1097.54px;font-size:19.5px;color:#231c1f;letter-spacing:1.063px;-webkit-text-stroke:0.28px #231c1f;transform:scaleX(1.0750);transform-origin:0 0;">0 min</span>
<span class="t" style="left:238.96px;top:1161.29px;font-size:19.5px;color:#231c1f;letter-spacing:0.919px;-webkit-text-stroke:0.28px #231c1f;transform:scaleX(1.0750);transform-origin:0 0;">Fri</span>
<span class="t" style="left:238.96px;top:1192.99px;font-size:19.5px;color:#231c1f;letter-spacing:0.306px;-webkit-text-stroke:0.28px #231c1f;transform:scaleX(1.0750);transform-origin:0 0;">May 29</span>
<span class="t" style="left:500.84px;top:1177.19px;font-size:19.5px;color:#231c1f;letter-spacing:0.577px;-webkit-text-stroke:0.28px #231c1f;transform:scaleX(1.0750);transform-origin:0 0;">08:35 AM</span>
<span class="t" style="left:722.84px;top:1177.19px;font-size:19.5px;color:#231c1f;letter-spacing:0.444px;-webkit-text-stroke:0.28px #231c1f;transform:scaleX(1.0750);transform-origin:0 0;">06:02 PM</span>
<span class="t" style="left:898.52px;top:1177.19px;font-size:19.5px;color:#231c1f;letter-spacing:0.789px;-webkit-text-stroke:0.28px #231c1f;transform:scaleX(1.0750);transform-origin:0 0;">22 min</span>
<span class="t" style="left:1069.84px;top:1177.19px;font-size:19.5px;color:#231c1f;letter-spacing:0.478px;-webkit-text-stroke:0.28px #231c1f;transform:scaleX(1.0750);transform-origin:0 0;">8 hr 0 min</span>
<span class="t" style="left:1240.19px;top:1177.19px;font-size:19.5px;color:#231c1f;letter-spacing:0.151px;-webkit-text-stroke:0.28px #231c1f;transform:scaleX(1.0750);transform-origin:0 0;">1 hr 27 min</span>
<span class="t" style="left:1410.84px;top:1177.19px;font-size:19.5px;color:#231c1f;letter-spacing:1.063px;-webkit-text-stroke:0.28px #231c1f;transform:scaleX(1.0750);transform-origin:0 0;">0 min</span>
<span class="t" style="left:239.67px;top:1240.94px;font-size:19.5px;color:#231c1f;letter-spacing:0.164px;-webkit-text-stroke:0.28px #231c1f;transform:scaleX(1.0750);transform-origin:0 0;">Thur</span>
<span class="t" style="left:238.96px;top:1272.64px;font-size:19.5px;color:#231c1f;letter-spacing:0.306px;-webkit-text-stroke:0.28px #231c1f;transform:scaleX(1.0750);transform-origin:0 0;">May 28</span>
<span class="t" style="left:500.84px;top:1256.84px;font-size:19.5px;color:#231c1f;letter-spacing:0.644px;-webkit-text-stroke:0.28px #231c1f;transform:scaleX(1.0750);transform-origin:0 0;">09:06 AM</span>
<span class="t" style="left:722.84px;top:1256.84px;font-size:19.5px;color:#231c1f;letter-spacing:0.444px;-webkit-text-stroke:0.28px #231c1f;transform:scaleX(1.0750);transform-origin:0 0;">05:07 PM</span>
<span class="t" style="left:898.52px;top:1256.84px;font-size:19.5px;color:#231c1f;letter-spacing:0.789px;-webkit-text-stroke:0.28px #231c1f;transform:scaleX(1.0750);transform-origin:0 0;">29 min</span>
<span class="t" style="left:1071.34px;top:1256.84px;font-size:19.5px;color:#231c1f;letter-spacing:0.065px;-webkit-text-stroke:0.28px #231c1f;transform:scaleX(1.0750);transform-origin:0 0;">8 hr 1 min</span>
<span class="t" style="left:1240.84px;top:1256.84px;font-size:19.5px;color:#231c1f;letter-spacing:0.831px;-webkit-text-stroke:0.28px #231c1f;transform:scaleX(1.0750);transform-origin:0 0;">0 min</span>
<span class="t" style="left:1410.84px;top:1256.84px;font-size:19.5px;color:#231c1f;letter-spacing:1.063px;-webkit-text-stroke:0.28px #231c1f;transform:scaleX(1.0750);transform-origin:0 0;">0 min</span>
<span class="t" style="left:240.00px;top:1320.59px;font-size:19.5px;color:#231c1f;letter-spacing:0.769px;-webkit-text-stroke:0.28px #231c1f;transform:scaleX(1.0750);transform-origin:0 0;">Wed</span>
<span class="t" style="left:238.96px;top:1352.29px;font-size:19.5px;color:#231c1f;letter-spacing:0.306px;-webkit-text-stroke:0.28px #231c1f;transform:scaleX(1.0750);transform-origin:0 0;">May 27</span>
<span class="t" style="left:500.19px;top:1336.49px;font-size:19.5px;color:#231c1f;-webkit-text-stroke:0.28px #231c1f;transform:scaleX(1.0750);transform-origin:0 0;">12:05 PM</span>
<span class="t" style="left:722.84px;top:1336.49px;font-size:19.5px;color:#231c1f;letter-spacing:0.444px;-webkit-text-stroke:0.28px #231c1f;transform:scaleX(1.0750);transform-origin:0 0;">07:45 PM</span>
<span class="t" style="left:898.84px;top:1336.49px;font-size:19.5px;color:#231c1f;letter-spacing:0.914px;-webkit-text-stroke:0.28px #231c1f;transform:scaleX(1.0750);transform-origin:0 0;">30 min</span>
<span class="t" style="left:1071.02px;top:1336.49px;font-size:19.5px;color:#231c1f;letter-spacing:0.539px;-webkit-text-stroke:0.28px #231c1f;transform:scaleX(1.0750);transform-origin:0 0;">7 hr 40 min</span>
<span class="t" style="left:1240.84px;top:1336.49px;font-size:19.5px;color:#231c1f;letter-spacing:0.831px;-webkit-text-stroke:0.28px #231c1f;transform:scaleX(1.0750);transform-origin:0 0;">0 min</span>
<span class="t" style="left:1410.84px;top:1336.49px;font-size:19.5px;color:#231c1f;letter-spacing:1.063px;-webkit-text-stroke:0.28px #231c1f;transform:scaleX(1.0750);transform-origin:0 0;">0 min</span>
<span class="t" style="left:240.28px;top:1400.24px;font-size:19.5px;color:#231c1f;-webkit-text-stroke:0.28px #231c1f;transform:scaleX(1.0352);transform-origin:0 0;">Tue</span>
<span class="t" style="left:238.96px;top:1431.94px;font-size:19.5px;color:#231c1f;letter-spacing:0.306px;-webkit-text-stroke:0.28px #231c1f;transform:scaleX(1.0750);transform-origin:0 0;">May 26</span>
<span class="t" style="left:439.50px;top:1398.64px;font-size:19.5px;color:#231c1f;letter-spacing:0.561px;-webkit-text-stroke:0.28px #231c1f;transform:scaleX(1.0750);transform-origin:0 0;">Approved PTO</span>
<span class="t" style="left:438.19px;top:1429.64px;font-size:19.5px;color:#231c1f;letter-spacing:0.318px;-webkit-text-stroke:0.28px #231c1f;transform:scaleX(1.0750);transform-origin:0 0;">by Max Frothinghman on May 1, 2020</span>
<span class="t" style="left:1071.34px;top:1416.14px;font-size:19.5px;color:#231c1f;letter-spacing:0.478px;-webkit-text-stroke:0.28px #231c1f;transform:scaleX(1.0750);transform-origin:0 0;">8 hr 0 min</span>
</div>
</body></html>
